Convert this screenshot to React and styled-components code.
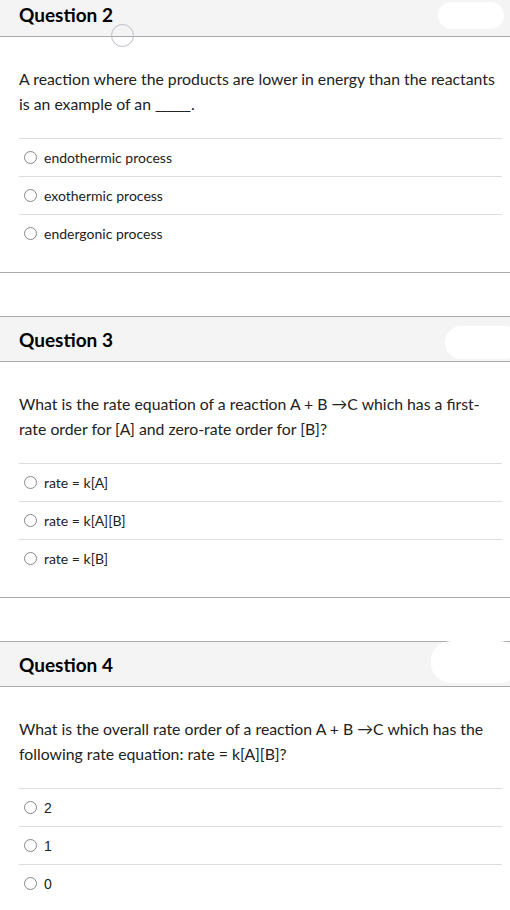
import React from 'react'
import styled, { createGlobalStyle } from 'styled-components'

const GlobalStyle = createGlobalStyle`
  html, body {
    margin: 0;
    padding: 0;
    background: #fff;
  }
  body {
    font-family: Lato, "Noto Sans", sans-serif;
    color: #222;
  }
`

const Page = styled.div`
  width: 510px;
  margin-top: -9px;
  display: flex;
  flex-direction: column;
  gap: 43px;
  overflow: hidden;
`

const Card = styled.section`
  position: relative;
  border-bottom: 1px solid #aaa;
`

const Header = styled.header`
  position: relative;
  height: 44px;
  padding: 0 19px;
  display: flex;
  align-items: center;
  background: #f4f4f4;
  border-top: 1px solid #aaa;
  border-bottom: 1px solid #aaa;
`

const Title = styled.h2`
  margin: 0;
  font-size: 19px;
  font-weight: 700;
  color: #000;
`

const Blob = styled.div`
  position: absolute;
  background: #fff;
  top: ${p => p.$top}px;
  left: ${p => p.$left}px;
  right: ${p => p.$right}px;
  height: ${p => p.$h}px;
  border-radius: ${p => p.$r};
`

const Body = styled.div`
  padding: 29px 8px 20px 19px;
`

const Prompt = styled.p`
  margin: 0;
  font-size: 15.8px;
  line-height: 25px;
  color: #222;
`

const Blank = styled.span`
  letter-spacing: -1.5px;
  margin-right: 1.5px;
`

const Options = styled.ul`
  list-style: none;
  margin: 22px 0 0;
  padding: 0;
`

const Option = styled.li`
  height: 37px;
  display: flex;
  align-items: center;
  gap: 7px;
  padding-left: 5px;
  border-top: 1px solid #ddd;
  font-size: 14px;
  font-family: ${p => (p.$num ? '"Liberation Sans", Arial, sans-serif' : 'Lato, sans-serif')};
  color: #222;
`

const Radio = styled.span`
  width: 11px;
  height: 11px;
  border: 1px solid #888;
  border-radius: 50%;
  flex: none;
`

const Cursor = styled.div`
  position: absolute;
  left: 111px;
  top: 32px;
  width: 21px;
  height: 21px;
  border: 1.5px solid #bdbdc8;
  border-radius: 50%;
`

const questions = [
  {
    n: 2,
    prompt: (
      <>
        A reaction where the products are lower in energy than the reactants is an example of an <Blank>______</Blank>.
      </>
    ),
    options: ['endothermic process', 'exothermic process', 'endergonic process'],
    blob: { top: 10, left: 438, right: 6, h: 27, r: '14px' },
    cursor: true,
  },
  {
    n: 3,
    prompt: 'What is the rate equation of a reaction A + B \u2192C which has a first-rate order for [A] and zero-rate order for [B]?',
    options: ['rate = k[A]', 'rate = k[A][B]', 'rate = k[B]'],
    blob: { top: 9, left: 445, right: -10, h: 33, r: '16px' },
  },
  {
    n: 4,
    prompt: 'What is the overall rate order of a reaction A + B \u2192C which has the following rate equation: rate = k[A][B]?',
    options: ['2', '1', '0'],
    num: true,
    blob: { top: -1, left: 431, right: -10, h: 42, r: '20px' },
  },
]

export default function App() {
  return (
    <>
      <GlobalStyle />
      <Page>
        {questions.map(q => (
          <Card key={q.n}>
            <Header>
              <Title>Question {q.n}</Title>
              <Blob $top={q.blob.top} $left={q.blob.left} $right={q.blob.right} $h={q.blob.h} $r={q.blob.r} />
              {q.cursor && <Cursor />}
            </Header>
            <Body>
              <Prompt>{q.prompt}</Prompt>
              <Options>
                {q.options.map(o => (
                  <Option key={o} $num={q.num}>
                    <Radio />
                    {o}
                  </Option>
                ))}
              </Options>
            </Body>
          </Card>
        ))}
      </Page>
    </>
  )
}
